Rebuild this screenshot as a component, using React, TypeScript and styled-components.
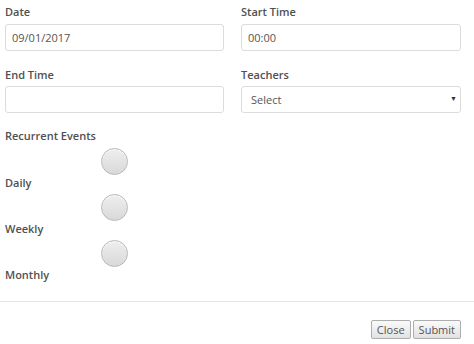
import styled, { createGlobalStyle } from 'styled-components'

const GlobalStyle = createGlobalStyle`
  body {
    margin: 0;
    background: #fff;
    font-family: "Open Sans", "Liberation Sans", sans-serif;
  }
`

const Form = styled.form`
  width: 474px;
  padding-top: 4px;
`

const Grid = styled.div`
  display: grid;
  grid-template-columns: 219px 220px;
  column-gap: 17px;
  row-gap: 16px;
  padding: 0 13px 0 5px;
`

const Field = styled.div`
  display: flex;
  flex-direction: column;
`

const Label = styled.label`
  display: block;
  font-size: 11px;
  line-height: 16px;
  font-weight: 600;
  color: #505050;
`

const TextInput = styled.input`
  box-sizing: border-box;
  width: 100%;
  height: 27px;
  margin-top: 3.5px;
  padding: 0 6px;
  border: 1px solid #dcdcdc;
  border-radius: 3px;
  font-family: inherit;
  font-size: 11px;
  color: #555;
  background: #fff;
  outline: none;
`

const SelectWrap = styled.div`
  position: relative;
  margin-top: 3.5px;
`

const Select = styled.select`
  box-sizing: border-box;
  width: 100%;
  height: 27px;
  padding: 0 0 0 9px;
  border: 1px solid #dcdcdc;
  border-radius: 3px;
  font-family: inherit;
  font-size: 11px;
  color: #555;
  background: #fff;
  appearance: none;
  outline: none;
`

const Arrow = styled.span`
  position: absolute;
  right: 4px;
  top: 9px;
  font-size: 7px;
  line-height: 8px;
  color: #333;
  pointer-events: none;
`

const Recurrent = styled.div`
  padding: 15px 0 0 5px;
`

const Option = styled.div`
  display: flex;
  flex-direction: column;
`

const Radio = styled.input.attrs({ type: 'radio' })<{ $first?: boolean }>`
  appearance: none;
  box-sizing: border-box;
  width: 27px;
  height: 27px;
  margin: ${p => (p.$first ? '3.5px' : '3px')} 0 0 96px;
  border: 1px solid #b8b8b8;
  border-radius: 50%;
  background: linear-gradient(#eeeeee, #d9d9d9);
  box-shadow: inset 0 1px 1px rgba(255, 255, 255, 0.8);
`

const Footer = styled.div`
  margin-top: 18px;
  border-top: 1px solid #e5e5e5;
  padding: 18px 13px 0 0;
  display: flex;
  justify-content: flex-end;
  gap: 2px;
`

const Button = styled.button`
  height: 19px;
  padding: 0 5px;
  border: 1px solid #adadad;
  border-radius: 2px;
  background: linear-gradient(#fafafa, #e2e2e2);
  font-family: inherit;
  font-size: 11px;
  line-height: 17px;
  color: #555;
`

const options = ['Daily', 'Weekly', 'Monthly']

const App = () => {
  return (
    <>
      <GlobalStyle />
      <Form onSubmit={e => e.preventDefault()}>
        <Grid>
          <Field>
            <Label>Date</Label>
            <TextInput defaultValue="09/01/2017" />
          </Field>
          <Field>
            <Label>Start Time</Label>
            <TextInput defaultValue="00:00" />
          </Field>
          <Field>
            <Label>End Time</Label>
            <TextInput />
          </Field>
          <Field>
            <Label>Teachers</Label>
            <SelectWrap>
              <Select defaultValue="">
                <option value="">Select</option>
              </Select>
              <Arrow>▼</Arrow>
            </SelectWrap>
          </Field>
        </Grid>
        <Recurrent>
          <Label>Recurrent Events</Label>
          {options.map((o, i) => (
            <Option key={o}>
              <Radio name="recurrent" $first={i === 0} />
              <Label>{o}</Label>
            </Option>
          ))}
        </Recurrent>
        <Footer>
          <Button type="button">Close</Button>
          <Button type="submit">Submit</Button>
        </Footer>
      </Form>
    </>
  )
}

export default App
